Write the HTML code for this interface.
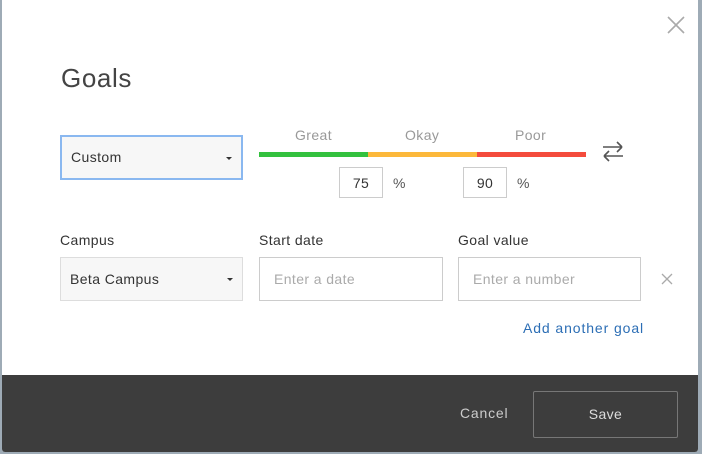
<!DOCTYPE html>
<html><head><style>
*{box-sizing:border-box;margin:0;padding:0}
body{width:702px;height:454px;background:#9eabb6;font-family:"Liberation Sans",sans-serif;position:relative;overflow:hidden;letter-spacing:0.4px}
.dlg{position:absolute;left:2px;top:0;width:696px;height:452px;background:#fff;border-radius:0 0 3px 3px;overflow:hidden}
.a{position:absolute}
.ft{position:absolute;left:0;top:375px;width:696px;height:77px;background:#3d3d3d}
.lbl{font-size:14px;color:#333}
.sel{background:#f7f7f7;border:1px solid #ddd;font-size:14px;color:#333;padding-left:9px;line-height:42px}
.sel:after{content:"";position:absolute;right:9px;top:20px;border-left:3px solid transparent;border-right:3px solid transparent;border-top:3px solid #333}
.inp{border:1px solid #ccc;font-size:14px;color:#aaa;padding-left:14px;line-height:42px}
.g{font-size:14px;color:#999}
.pct{border:1px solid #ccc;font-size:14px;color:#333;text-align:center;line-height:30px}
</style></head><body>
<div class="dlg">
<svg class="a" style="left:665px;top:16px" width="18" height="18"><path d="M1 1L17 17M17 1L1 17" stroke="#aaa" stroke-width="1.6"/></svg>
<div class="a" style="left:59px;top:63px;font-size:26px;color:#444;letter-spacing:0.6px">Goals</div>
<div class="a sel" style="left:58px;top:135px;width:183px;height:45px;border:2px solid #8ab8f0;line-height:41px">Custom</div>
<div class="a g" style="left:293px;top:127px">Great</div>
<div class="a g" style="left:403px;top:127px">Okay</div>
<div class="a g" style="left:513px;top:127px">Poor</div>
<div class="a" style="left:257px;top:152px;width:110px;height:5px;background:#33c13e"></div>
<div class="a" style="left:366px;top:152px;width:110px;height:5px;background:#fcb83b"></div>
<div class="a" style="left:475px;top:152px;width:109px;height:5px;background:#f44b3c"></div>
<svg class="a" style="left:599px;top:140px" width="24" height="24"><path d="M2 7H21M16 2L21 7M22 16H3M8 11L3 16M8 21L3 16M16 12L21 7" stroke="#555" stroke-width="1.6" fill="none"/></svg>
<div class="a pct" style="left:337px;top:167px;width:44px;height:31px">75</div>
<div class="a g" style="left:391px;top:175px;color:#555">%</div>
<div class="a pct" style="left:461px;top:167px;width:44px;height:31px">90</div>
<div class="a g" style="left:515px;top:175px;color:#555">%</div>
<div class="a lbl" style="left:58px;top:232px">Campus</div>
<div class="a lbl" style="left:257px;top:232px">Start date</div>
<div class="a lbl" style="left:456px;top:232px">Goal value</div>
<div class="a sel" style="left:58px;top:257px;width:183px;height:44px">Beta Campus</div>
<div class="a inp" style="left:257px;top:257px;width:184px;height:44px">Enter a date</div>
<div class="a inp" style="left:456px;top:257px;width:183px;height:44px">Enter a number</div>
<svg class="a" style="left:659px;top:273px" width="12" height="12"><path d="M1 1L11 11M11 1L1 11" stroke="#aaa" stroke-width="1.3"/></svg>
<div class="a" style="left:521px;top:320px;font-size:14px;color:#2c6eb5;letter-spacing:0.9px">Add another goal</div>
<div class="ft">
<div class="a" style="left:458px;top:30px;font-size:14px;color:#ccc;letter-spacing:0.8px">Cancel</div>
<div class="a" style="left:531px;top:16px;width:145px;height:47px;border:1px solid #777;border-radius:2px;color:#ddd;font-size:14px;text-align:center;line-height:45px">Save</div>
</div>
</div>
</body></html>
